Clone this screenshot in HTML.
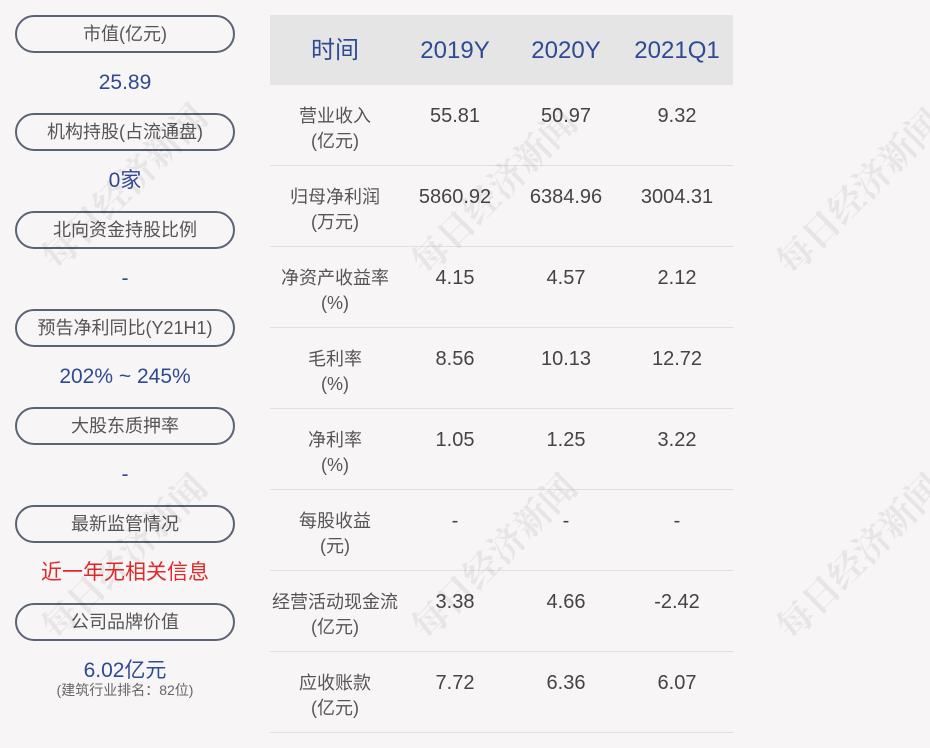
<!DOCTYPE html>
<html><head><meta charset="utf-8"><style>
*{margin:0;padding:0;box-sizing:border-box}
body{width:930px;height:748px;background:#f8f5f6;font-family:"Liberation Sans","Noto Sans CJK SC",sans-serif;position:relative;overflow:hidden}
.pill{position:absolute;left:15px;width:220px;height:38px;border:2px solid #5b6474;border-radius:19px;text-align:center;line-height:35px;font-size:18px;color:#555}
.val{position:absolute;left:15px;width:220px;text-align:center;font-size:21px;color:#2f4a94;line-height:24px}
.hdr{position:absolute;left:270px;top:15px;width:463px;height:70px;background:#e5e5e5}
.h{position:absolute;top:16px;height:70px;line-height:70px;font-size:24px;color:#2f4a94;text-align:center;width:120px}
.row{position:absolute;left:270px;width:463px;height:81px;border-bottom:1px solid #e2dfe0}
.c{position:absolute;top:19px;font-size:18px;color:#555;text-align:center;width:130px;line-height:25px}
.v{font-size:20px;color:#444}
.wm{position:absolute;font-size:36px;font-weight:bold;color:#000;opacity:.06;transform:rotate(-45deg);white-space:nowrap;font-family:"Noto Serif CJK SC",serif}
</style></head><body>
<div class="pill" style="top:15px">市值(亿元)</div>
<div class="val" style="top:71px">25.89</div>
<div class="pill" style="top:113px">机构持股(占流通盘)</div>
<div class="val" style="top:169px">0家</div>
<div class="pill" style="top:211px">北向资金持股比例</div>
<div class="val" style="top:267px">-</div>
<div class="pill" style="top:309px">预告净利同比(Y21H1)</div>
<div class="val" style="top:365px">202% ~ 245%</div>
<div class="pill" style="top:407px">大股东质押率</div>
<div class="val" style="top:463px">-</div>
<div class="pill" style="top:505px">最新监管情况</div>
<div class="val" style="top:561px;color:#e02a2a">近一年无相关信息</div>
<div class="pill" style="top:603px">公司品牌价值</div>
<div class="val" style="top:659px">6.02亿元</div>
<div class="val" style="top:681px;font-size:14px;color:#666;line-height:18px">(建筑行业排名：82位)</div>

<div class="hdr"></div>
<div class="h" style="left:275px">时间</div>
<div class="h" style="left:395px">2019Y</div>
<div class="h" style="left:506px">2020Y</div>
<div class="h" style="left:617px">2021Q1</div>

<div class="row" style="top:85px"><div class="c" style="left:0">营业收入<br>(亿元)</div><div class="c v" style="left:120px">55.81</div><div class="c v" style="left:231px">50.97</div><div class="c v" style="left:342px">9.32</div></div>
<div class="row" style="top:166px"><div class="c" style="left:0">归母净利润<br>(万元)</div><div class="c v" style="left:120px">5860.92</div><div class="c v" style="left:231px">6384.96</div><div class="c v" style="left:342px">3004.31</div></div>
<div class="row" style="top:247px"><div class="c" style="left:0">净资产收益率<br>(%)</div><div class="c v" style="left:120px">4.15</div><div class="c v" style="left:231px">4.57</div><div class="c v" style="left:342px">2.12</div></div>
<div class="row" style="top:328px"><div class="c" style="left:0">毛利率<br>(%)</div><div class="c v" style="left:120px">8.56</div><div class="c v" style="left:231px">10.13</div><div class="c v" style="left:342px">12.72</div></div>
<div class="row" style="top:409px"><div class="c" style="left:0">净利率<br>(%)</div><div class="c v" style="left:120px">1.05</div><div class="c v" style="left:231px">1.25</div><div class="c v" style="left:342px">3.22</div></div>
<div class="row" style="top:490px"><div class="c" style="left:0">每股收益<br>(元)</div><div class="c v" style="left:120px">-</div><div class="c v" style="left:231px">-</div><div class="c v" style="left:342px">-</div></div>
<div class="row" style="top:571px"><div class="c" style="left:-5px;width:140px">经营活动现金流<br>(亿元)</div><div class="c v" style="left:120px">3.38</div><div class="c v" style="left:231px">4.66</div><div class="c v" style="left:342px">-2.42</div></div>
<div class="row" style="top:652px"><div class="c" style="left:0">应收账款<br>(亿元)</div><div class="c v" style="left:120px">7.72</div><div class="c v" style="left:231px">6.36</div><div class="c v" style="left:342px">6.07</div></div>

<div class="wm" style="left:15px;top:160px">每日经济新闻</div>
<div class="wm" style="left:385px;top:165px">每日经济新闻</div>
<div class="wm" style="left:750px;top:165px">每日经济新闻</div>
<div class="wm" style="left:15px;top:530px">每日经济新闻</div>
<div class="wm" style="left:385px;top:530px">每日经济新闻</div>
<div class="wm" style="left:750px;top:530px">每日经济新闻</div>
</body></html>
